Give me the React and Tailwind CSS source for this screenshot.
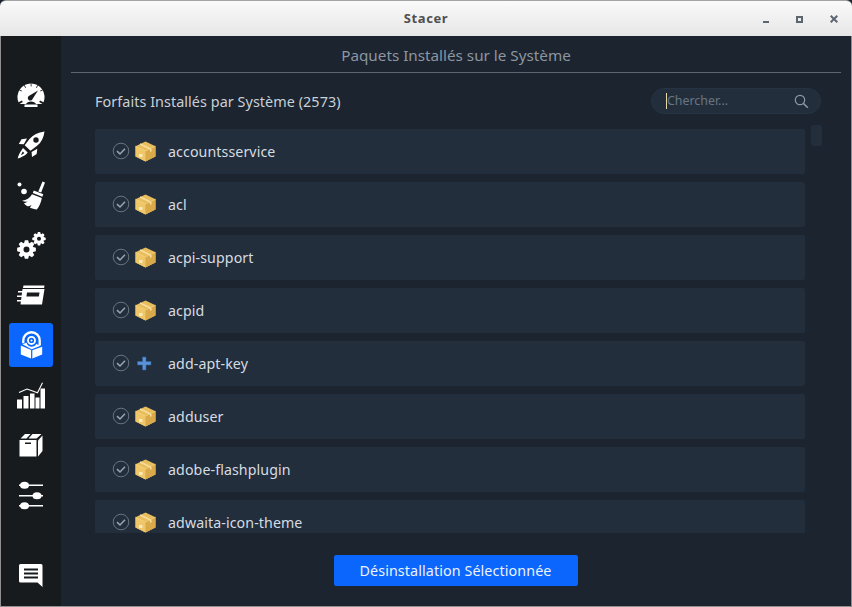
const font = { fontFamily: '"Noto Sans", "Open Sans", sans-serif' };

const pkgs = [
  ['accountsservice', 'box'],
  ['acl', 'box'],
  ['acpi-support', 'box'],
  ['acpid', 'box'],
  ['add-apt-key', 'plus'],
  ['adduser', 'box'],
  ['adobe-flashplugin', 'box'],
  ['adwaita-icon-theme', 'box'],
];

function Check() {
  return (
    <svg width="18" height="18" viewBox="0 0 18 18" fill="none" className="-mt-px shrink-0">
      <circle cx="9" cy="9" r="7.800" stroke="#67737f" strokeWidth="1" />
      <path d="M5 9.200l3 2.800 5-5.200" stroke="#9aa3ad" strokeWidth="1.600" />
    </svg>
  );
}

function Box() {
  return (
    <svg width="21" height="21" viewBox="0 0 21 21" className="shrink-0">
      <path d="M10.500 0.500L20.500 5.200V15.600L10.500 20.500L0.500 15.600V5.200Z" fill="#e8bd5c" />
      <path d="M0.500 5.200L10.500 10V20.500L0.500 15.600Z" fill="#f0c768" />
      <path d="M20.500 5.200L10.500 10V20.500L20.500 15.600Z" fill="#d9a94a" />
      <path d="M5 3L15.500 8L16 10.500" stroke="#f7de9f" strokeWidth="1.600" fill="none" />
      <path d="M0.500 5.200L10.500 10L20.500 5.200" stroke="#f5d68a" strokeWidth="0.600" fill="none" />
      <rect x="4" y="13" width="3.500" height="3" fill="#fbeecb" opacity="0.850" />
    </svg>
  );
}

function Plus() {
  return (
    <svg width="15" height="15" viewBox="0 0 15 15" className="shrink-0">
      <path d="M5.500 1h3.500v4.500h5v3.500h-5v5h-3.500v-5h-5v-3.500h5z" fill="#5b92d6" stroke="#2f5f9e" strokeWidth="0.600" />
    </svg>
  );
}

function Row({ name, icon }) {
  return (
    <div className="flex h-[45px] shrink-0 items-center rounded-[2px] bg-[#222e3c] pl-[17px]">
      <Check />
      {icon === 'box' ? (
        <span className="-mt-px ml-[5px] flex w-[21px] justify-center"><Box /></span>
      ) : (
        <span className="-mt-px ml-[5px] flex w-[21px] justify-center pr-[3px]"><Plus /></span>
      )}
      <span className="ml-[12px] text-[14.200px] tracking-[0.1px] text-[#d6dce2]">{name}</span>
    </div>
  );
}

function Gauge() {
  return (
    <svg width="28" height="24" viewBox="0 0 28 24">
      <path fill="#fff" d="M14 .5a13.500 13.500 0 0 1 12.500 18.700l-3.500-1.700-.8 1.400 3.300 2H19c-.8-1.500-2.600-2.400-5-2.400s-4.200.9-5 2.400H2.500l3.300-2-.8-1.400-3.500 1.700A13.500 13.500 0 0 1 14 .5z" />
      <path fill="#171b1e" d="M21 7.500l-8.800 5.300a2.500 2.500 0 1 0 3.500 2.900z" />
      <path fill="#171b1e" d="M13.700.5h.8v3h-.8zM6.800 2.300l.7-.4 1.500 2.600-.7.400zM21.200 2.300l-.7-.4L19 4.500l.7.400zM1.900 7l.4-.7 2.600 1.500-.4.700zM26.100 7l-.4-.7-2.600 1.500.4.700z" />
      <path fill="#fff" d="M7.500 21.500h13V24h-13z" />
    </svg>
  );
}

function Rocket() {
  return (
    <svg width="28" height="28" viewBox="0 0 28 28" fill="#fff">
      <path fillRule="evenodd" d="M27.500 0.500c-6.500.800-11.500 3.200-15 7.500l-4.800 6.300 5.800 5.500 6.300-4.700c4.500-3.500 7-8.500 7.700-14.600zM19 6.300a2.700 2.700 0 1 1 0 5.400 2.700 2.700 0 0 1 0-5.400z" />
      <path d="M10 7.500L4.500 8.300 1.800 13l5 .200zM20.300 17.700l-.600 5.300-4.700 2.900-.400-4.800z" />
      <path d="M6 17l4.700 4.500-1.500 1.800c-2 1.600-5 3.300-8.500 4.200.700-3.500 2.400-6.500 4-8.500z" />
      <path fill="#171b1e" d="M5.800 20.500l1.500 1.500c-1 1-2 1.700-3.300 2.300.500-1.300 1-2.600 1.800-3.800z" />
    </svg>
  );
}

function Broom() {
  return (
    <svg width="29" height="29" viewBox="0 0 29 29" fill="#fff">
      <circle cx="2.500" cy="3.500" r="2" />
      <circle cx="7" cy="10.500" r="2.800" />
      <path d="M25.500 0.500l2.500 1-3.800 10-2.900-1.100z" />
      <path d="M16.800 9.500l9.500 3.700-1 2.600-9.500-3.700z" />
      <path d="M15 13.300l9.800 3.800c-.600 3.800-2.300 8.400-5 11.400-2.200-.200-5-.900-7-2 .800-.700 1.400-1.700 1.700-2.800-1.200 1-2.800 1.600-4 1.600-1.400-.800-2.600-1.800-3.600-3 1.500-.200 3-.800 3.900-1.700-1.900.400-3.800.100-5.800-.800 4.500-.400 8-2.800 10-6.500z" />
    </svg>
  );
}

function gearPath(cx, cy, r1, r2, n) {
  let d = '';
  const step = (Math.PI * 2) / n;
  for (let i = 0; i < n; i++) {
    const a = i * step;
    const pts = [
      [r1, a - step * 0.45], [r2, a - step * 0.22], [r2, a + step * 0.22], [r1, a + step * 0.45],
    ];
    pts.forEach(([r, t], j) => {
      d += `${i === 0 && j === 0 ? 'M' : 'L'}${(cx + r * Math.cos(t)).toFixed(2)} ${(cy + r * Math.sin(t)).toFixed(2)}`;
    });
  }
  return d + 'Z';
}

function Gears() {
  return (
    <svg width="29" height="27" viewBox="0 0 29 27" fill="#fff">
      <path fillRule="evenodd" d={gearPath(9.500, 17.500, 7, 9.500, 8) + 'M9.500 14.500a3 3 0 1 0 0 6 3 3 0 0 0 0-6z'} />
      <path fillRule="evenodd" d={gearPath(22, 6.800, 5, 6.800, 8) + 'M22 4.800a2 2 0 1 0 0 4 2 2 0 0 0 0-4z'} />
    </svg>
  );
}

function Drive() {
  return (
    <svg width="28" height="20" viewBox="0 0 28 20" fill="#fff">
      <path d="M6.500 0.500h21l-.400 2.500H6z" />
      <path fillRule="evenodd" d="M5.500 4h22L25 19.500H3.500zM10 7.500l-.600 4h12.500l.600-4z" />
      <path d="M1 6h5.500v1.500H1zM0 10.500h5.500V12H0zM0 15h4.500v1.500H0z" />
    </svg>
  );
}

function PkgLock() {
  return (
    <svg width="23" height="28" viewBox="0 0 28 34" fill="none">
      <path d="M4 15v-3.500a10 10 0 0 1 20 0v6" stroke="#fff" strokeWidth="2.800" />
      <circle cx="14" cy="11.500" r="4.300" stroke="#fff" strokeWidth="2.200" />
      <circle cx="14" cy="11.500" r="1.200" fill="#fff" />
      <path d="M1 17.500l12.500 5.500v10.500L1 28.500z" fill="#fff" />
      <path d="M27 19v9.500l-12 5V23.500z" fill="#fff" />
      <path d="M3 16.200l5-2a6.500 6.500 0 0 0 12 1.600l5 2-10.800 4.500z" fill="#fff" />
    </svg>
  );
}

function Chart() {
  return (
    <svg width="28" height="28" viewBox="0 0 28 28" fill="#fff">
      <path d="M0 18.500h5v9H0zM6.500 15h5v12.500h-5zM13 12.500h4.500v15H13zM18.500 16.500h4v11h-4zM23.500 7.500H28v20h-4.500z" />
      <path d="M2 11.500l8-3.500 5 1.800 5.500 2 5-10" fill="none" stroke="#fff" strokeWidth="1.100" />
    </svg>
  );
}

function Crate() {
  return (
    <svg width="24" height="23" viewBox="0 0 24 23" fill="#fff">
      <path fillRule="evenodd" d="M0.500 6h17v16.500h-17zM6 8.500v1.500h6V8.500z" />
      <path d="M19 6.500l4.500-5V17L19 22.500z" />
      <path d="M1.500 4.500L6 0h5.500L7.500 4.500zM9.500 4.500L13.500 0h9l-5 4.500z" />
    </svg>
  );
}

function Sliders() {
  return (
    <svg width="24" height="29" viewBox="0 0 24 29" fill="#fff">
      <path d="M0 3.500h24v1.500H0zM0 14h24v1.500H0zM0 24h24v1.500H0z" />
      <ellipse cx="5.500" cy="4.250" rx="4.500" ry="3.500" />
      <ellipse cx="18" cy="14.750" rx="4.500" ry="3.500" />
      <ellipse cx="5.500" cy="24.750" rx="4.500" ry="3.500" />
    </svg>
  );
}

function Chat() {
  return (
    <svg width="24" height="23" viewBox="0 0 24 23" fill="#fff">
      <path fillRule="evenodd" d="M1.500 0h20.500a1.500 1.500 0 0 1 1.500 1.500V23l-5-4.500H1.500A1.500 1.500 0 0 1 0 17V1.500A1.500 1.500 0 0 1 1.500 0zM5 4.500v2h14v-2zM5 8.500v2h14v-2zM5 12.500v2h14v-2z" />
    </svg>
  );
}

const side = [
  [Gauge, 0], [Rocket, 0], [Broom, 0], [Gears, 0], [Drive, 0], [PkgLock, 1], [Chart, 0], [Crate, 0], [Sliders, 0],
];

export default function App() {
  return (
    <div style={font} className="flex h-[607px] w-[852px] flex-col overflow-hidden bg-[#1c2430]">
      <div className="relative flex h-[36px] shrink-0 items-center justify-center rounded-t-[6px] border-t border-[#a3a3a3] bg-gradient-to-b from-[#fafafa] to-[#e6e6e6]">
        <span className="text-[13px] font-bold tracking-[0.600px] text-[#4f4f4f]">Stacer</span>
        <div className="absolute right-[14px] top-[14px] flex items-center gap-[27px]">
          <span className="mt-[5px] h-[2px] w-[6px] bg-[#5c6670]" />
          <span className="h-[7px] w-[7px] border-2 border-[#5c6670]" />
          <svg width="8" height="8" viewBox="0 0 8 8"><path d="M.7.700l6.600 6.600M7.300.700L.7 7.300" stroke="#5c6670" strokeWidth="2" /></svg>
        </div>
      </div>
      <div className="flex min-h-0 flex-1 border-x border-b border-[#8f8f8f]">
        <div className="flex w-[60px] shrink-0 flex-col items-center bg-[#171b1e]">
          <div className="flex flex-col items-center gap-[6px] pt-[37px]">
            {side.map(([Icon, active], i) => (
              <div key={i} className={`flex h-[44px] w-[44px] items-center justify-center ${active ? 'rounded-[3px] bg-[#0a66fd]' : ''}`}>
                <Icon />
              </div>
            ))}
          </div>
          <div className="mt-auto flex pb-[19px]"><Chat /></div>
        </div>
        <div className="flex min-w-0 flex-1 flex-col">
          <div className="mx-[10px] flex h-[37px] shrink-0 items-center justify-center border-b border-[#5b6670] pt-[2px]">
            <span className="text-[15.250px] text-[#8c96a1]">Paquets Installés sur le Système</span>
          </div>
          <div className="flex h-[56px] shrink-0 items-center justify-between pl-[34px] pr-[30px]">
            <span className="mt-[2px] text-[14.400px] tracking-[0.05px] text-[#c9d0d7]">Forfaits Installés par Système (2573)</span>
            <div className="flex h-[26px] w-[170px] items-center rounded-full border border-[#263342] bg-[#222e3c] pl-[14px] pr-[11px]">
              <span className="h-[16px] w-px bg-[#e8d9a8]" />
              <span className="text-[12.400px] text-[#6a7682]">Chercher...</span>
              <svg className="ml-auto" width="15" height="15" viewBox="0 0 15 15" fill="none">
                <circle cx="6" cy="6" r="4.700" stroke="#8d98a3" strokeWidth="1.200" />
                <path d="M9.500 9.500l4.300 4.300" stroke="#8d98a3" strokeWidth="1.600" />
              </svg>
            </div>
          </div>
          <div className="flex min-h-0 pl-[34px]">
            <div className="flex h-[404px] w-[710px] flex-col gap-[8px] overflow-hidden">
              {pkgs.map(([n, i]) => <Row key={n} name={n} icon={i} />)}
            </div>
            <div className="ml-[6px] mt-[-4px] h-[21px] w-[11px] rounded-[2px] bg-[#222e3c]" />
          </div>
          <div className="flex flex-1 items-start justify-center pr-[1px] pt-[22px]">
            <button className="h-[31px] w-[244px] rounded-[2px] bg-[#0a66fd] text-[14.300px] tracking-[0.1px] text-[#eef3fb]">Désinstallation Sélectionnée</button>
          </div>
        </div>
      </div>
    </div>
  );
}
